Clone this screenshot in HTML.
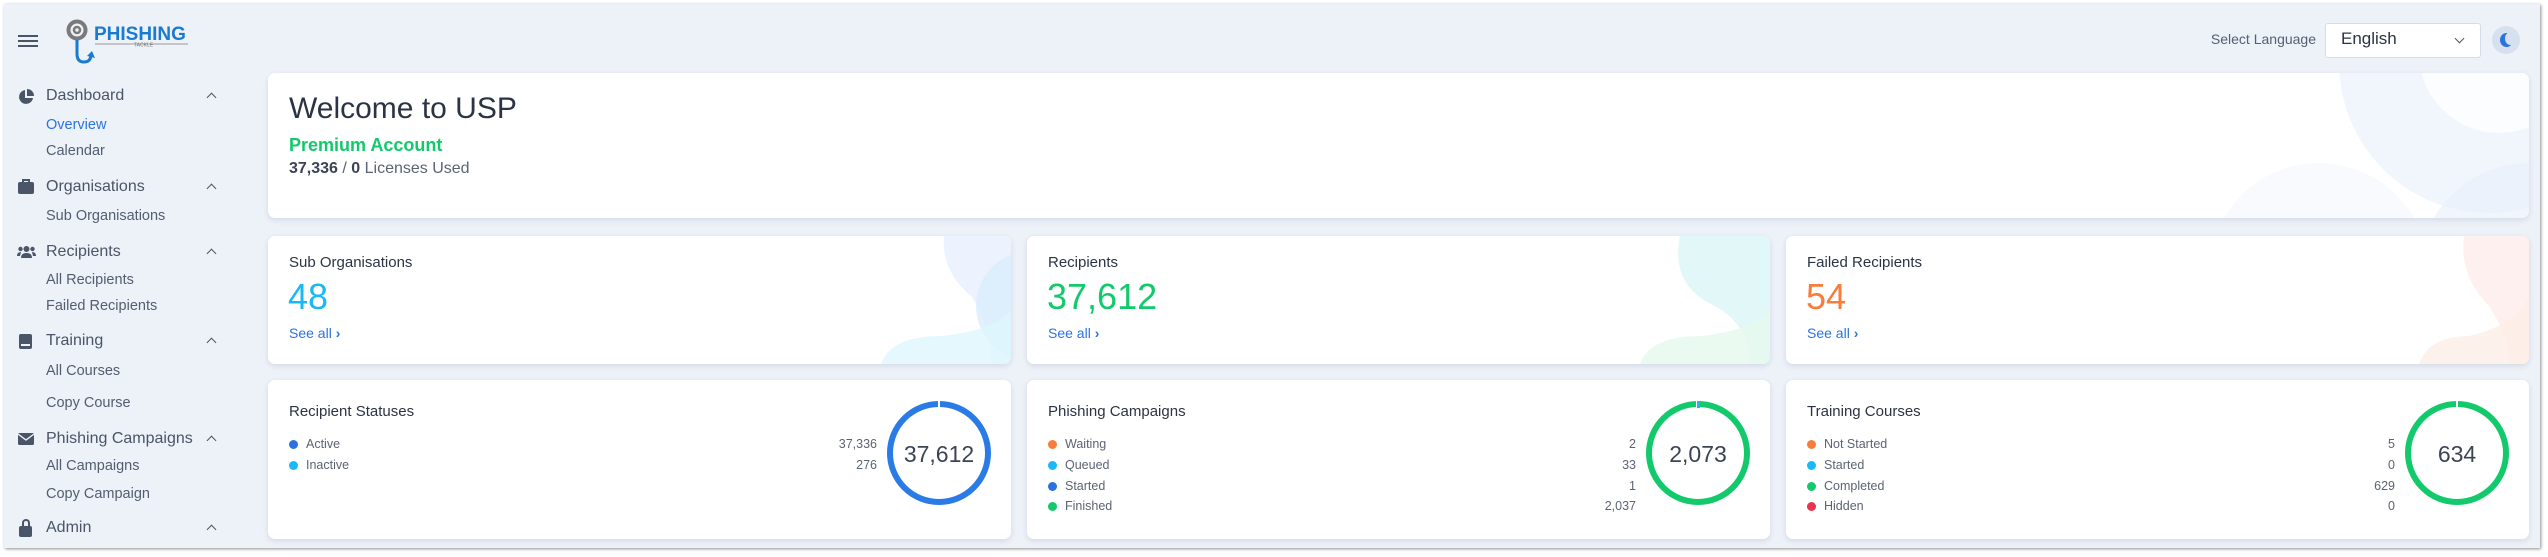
<!DOCTYPE html>
<html><head><meta charset="utf-8"><style>
*{margin:0;padding:0;box-sizing:border-box}
body{width:2548px;height:557px;background:#fff;font-family:"Liberation Sans",sans-serif;position:relative;overflow:hidden;color:#2b3445}
.frame{position:absolute;left:4px;top:4px;width:2536px;height:544px;background:#edf1f8;box-shadow:1px 1px 3px rgba(0,0,0,.45);overflow:hidden}
.a{position:absolute;white-space:nowrap}
.card{position:absolute;background:#fff;border-radius:7px;box-shadow:0 2px 6px rgba(30,50,90,.12);overflow:hidden}
.nav{font-size:16px;color:#4a5568;line-height:20px}
.sub{font-size:14.5px;color:#525e70;line-height:20px}
.chev{position:absolute;left:208px;width:7px;height:7px;border-left:1.5px solid #555;border-top:1.5px solid #555;transform:rotate(45deg)}
.ttl{font-size:15px;color:#2b3445}
.leg{font-size:12.5px;color:#5a6474;line-height:16px}
.dot{position:absolute;width:9px;height:9px;border-radius:50%}
.val{font-size:12.5px;color:#5a6474;text-align:right;width:80px;line-height:16px}
.see{font-size:14px;color:#2a74e0}
.num{font-size:23px;color:#3a4455}
</style></head><body>
<div class="frame"></div>
<!-- header -->
<div class="a" style="left:18px;top:35px;width:20px;height:2px;background:#4a5568;box-shadow:0 5px 0 #4a5568,0 10px 0 #4a5568"></div>
<svg class="a" style="left:62px;top:18px" width="130" height="48" viewBox="0 0 130 48">
<circle cx="15" cy="12" r="8.5" fill="none" stroke="#7a7a7a" stroke-width="4"/><circle cx="15" cy="12" r="3" fill="none" stroke="#7a7a7a" stroke-width="2.5"/>
<path d="M15 22 V36 Q15 44 22 44 Q28 44 29 38" fill="none" stroke="#1a7ad0" stroke-width="3"/><path d="M25 38 L30 33 L33 40Z" fill="#1a7ad0"/>
<text x="32" y="22" font-family="Liberation Sans" font-weight="bold" font-size="19" fill="#1a7ad0">PHISHING</text>
<line x1="33" y1="26" x2="126" y2="26" stroke="#999" stroke-width="1"/>
<text x="72" y="28.5" font-family="Liberation Sans" font-size="5" fill="#777">TACKLE</text>
</svg>
<div class="a" style="right:232px;top:31px;font-size:14px;color:#556070">Select Language</div>
<div class="a" style="left:2325px;top:23px;width:156px;height:35px;background:#fff;border:1px solid #d7dde7;border-radius:3px"></div>
<div class="a" style="left:2341px;top:29px;font-size:17px;color:#2b3445">English</div>
<div class="a" style="left:2456px;top:35px;width:7px;height:7px;border-right:1.5px solid #555;border-bottom:1.5px solid #555;transform:rotate(45deg)"></div>
<div class="a" style="left:2492px;top:26px;width:28px;height:28px;border-radius:50%;background:#d6e0ee"></div>
<div class="a" style="left:2500px;top:33px;width:13px;height:14px;border-radius:50%;background:#2a74e0"></div>
<div class="a" style="left:2505px;top:32px;width:11px;height:13px;border-radius:50%;background:#d6e0ee"></div>
<!-- sidebar -->
<svg class="a" style="left:18px;top:89px" width="16" height="16" viewBox="0 0 16 16"><path d="M7 1 A7 7 0 1 0 15 9 H7Z" fill="#4a5568"/><path d="M9 0 A7 7 0 0 1 16 7 H9Z" fill="#4a5568"/></svg>
<div class="a nav" style="left:46px;top:86px">Dashboard</div><div class="chev" style="top:94px"></div>
<div class="a sub" style="left:46px;top:115px;color:#2a74e0">Overview</div>
<div class="a sub" style="left:46px;top:141px">Calendar</div>
<div class="a" style="left:18px;top:182px;width:16px;height:12px;background:#4a5568;border-radius:2px"></div><div class="a" style="left:22px;top:179px;width:8px;height:4px;border:2px solid #4a5568;border-bottom:none"></div>
<div class="a nav" style="left:46px;top:177px">Organisations</div><div class="chev" style="top:185px"></div>
<div class="a sub" style="left:46px;top:206px">Sub Organisations</div>
<svg class="a" style="left:17px;top:245px" width="19" height="14" viewBox="0 0 19 14"><circle cx="9.5" cy="4" r="3" fill="#4a5568"/><circle cx="3.5" cy="4" r="2.2" fill="#4a5568"/><circle cx="15.5" cy="4" r="2.2" fill="#4a5568"/><path d="M4 13 Q4 8 9.5 8 Q15 8 15 13Z M0 11 Q0 7 4 7 L3 11Z M19 11 Q19 7 15 7 L16 11Z" fill="#4a5568"/></svg>
<div class="a nav" style="left:46px;top:242px">Recipients</div><div class="chev" style="top:250px"></div>
<div class="a sub" style="left:46px;top:270px">All Recipients</div>
<div class="a sub" style="left:46px;top:296px">Failed Recipients</div>
<div class="a" style="left:19px;top:334px;width:13px;height:15px;background:#4a5568;border-radius:2px"></div><div class="a" style="left:21px;top:344px;width:9px;height:2px;background:#edf1f8"></div>
<div class="a nav" style="left:46px;top:331px">Training</div><div class="chev" style="top:339px"></div>
<div class="a sub" style="left:46px;top:361px">All Courses</div>
<div class="a sub" style="left:46px;top:393px">Copy Course</div>
<svg class="a" style="left:18px;top:433px" width="16" height="12" viewBox="0 0 16 12"><rect width="16" height="12" rx="1.5" fill="#4a5568"/><path d="M0 1 L8 7 L16 1" fill="none" stroke="#edf1f8" stroke-width="1.4"/></svg>
<div class="a nav" style="left:46px;top:429px">Phishing Campaigns</div><div class="chev" style="top:437px"></div>
<div class="a sub" style="left:46px;top:456px">All Campaigns</div>
<div class="a sub" style="left:46px;top:484px">Copy Campaign</div>
<div class="a" style="left:19px;top:526px;width:13px;height:11px;background:#4a5568;border-radius:2px"></div><div class="a" style="left:21.5px;top:519px;width:8px;height:10px;border:2px solid #4a5568;border-radius:4px 4px 0 0;border-bottom:none"></div>
<div class="a nav" style="left:46px;top:518px">Admin</div><div class="chev" style="top:526px"></div>
<!-- welcome -->
<div class="card" style="left:268px;top:73px;width:2261px;height:145px">
<svg class="a" style="right:0;top:0" width="340" height="145"><circle cx="300" cy="-10" r="150" fill="#f1f6fd"/><circle cx="310" cy="-20" r="80" fill="#fff" opacity=".8"/><circle cx="340" cy="200" r="110" fill="#e8f0fb" opacity=".6"/><circle cx="130" cy="200" r="110" fill="#f8fafe"/></svg>
<div class="a" style="left:21px;top:19px;font-size:30px;color:#2b3445">Welcome to USP</div>
<div class="a" style="left:21px;top:62px;font-size:18px;font-weight:bold;color:#12c96b">Premium Account</div>
<div class="a" style="left:21px;top:87px;font-size:16px;color:#5a6474"><b style="color:#3a4455">37,336</b> / <b style="color:#3a4455">0</b> Licenses Used</div>
</div>
<!-- stat cards -->
<div class="card" style="left:268px;top:236px;width:743px;height:128px">
<svg class="a" style="right:0;top:0" width="130" height="128"><path d="M63 0 Q60 35 90 60 Q110 90 110 128 H130 V0Z" fill="#ecf2fe"/><circle cx="150" cy="70" r="55" fill="#d9ecfd" opacity=".8"/><path d="M0 128 Q10 100 60 100 Q110 95 130 75 V128Z" fill="#def6fd" opacity=".8"/></svg>
<div class="a ttl" style="left:21px;top:18px">Sub Organisations</div>
<div class="a" style="left:20px;top:40px;font-size:36px;color:#1ab8f5">48</div>
<div class="a see" style="left:21px;top:89px">See all <b>›</b></div></div>
<div class="card" style="left:1027px;top:236px;width:743px;height:128px">
<svg class="a" style="right:0;top:0" width="130" height="128"><path d="M40 0 Q30 50 75 70 Q110 90 110 128 H130 V0Z" fill="#e1f7f8"/><path d="M0 128 Q10 100 60 100 Q110 95 130 75 V128Z" fill="#e6f9ee" opacity=".8"/></svg>
<div class="a ttl" style="left:21px;top:18px">Recipients</div>
<div class="a" style="left:20px;top:40px;font-size:36px;color:#12c96b">37,612</div>
<div class="a see" style="left:21px;top:89px">See all <b>›</b></div></div>
<div class="card" style="left:1786px;top:236px;width:743px;height:128px">
<svg class="a" style="right:0;top:0" width="110" height="128"><path d="M45 0 Q40 40 70 70 Q90 100 90 128 H110 V0Z" fill="#fdf0ee"/><path d="M0 128 Q10 100 50 100 Q95 90 110 60 V128Z" fill="#fdeee6" opacity=".8"/></svg>
<div class="a ttl" style="left:21px;top:18px">Failed Recipients</div>
<div class="a" style="left:20px;top:40px;font-size:36px;color:#f87c3a">54</div>
<div class="a see" style="left:21px;top:89px">See all <b>›</b></div></div>
<!-- chart cards -->
<div class="card" style="left:268px;top:380px;width:743px;height:159px">
<div class="a ttl" style="left:21px;top:23px">Recipient Statuses</div>
<div class="dot" style="left:21px;top:60px;background:#2a74e0"></div><div class="a leg" style="left:38px;top:56px">Active</div><div class="a val" style="left:529px;top:56px">37,336</div>
<div class="dot" style="left:21px;top:81px;background:#1ab8f5"></div><div class="a leg" style="left:38px;top:77px">Inactive</div><div class="a val" style="left:529px;top:77px">276</div>
<svg class="a" style="left:618px;top:20px" width="106" height="106"><circle cx="53" cy="53" r="49" fill="none" stroke="#2a7be5" stroke-width="6"/><rect x="52" y="1" width="2" height="7" fill="#fff"/></svg>
<div class="a num" style="left:618px;top:61px;width:106px;text-align:center">37,612</div></div>
<div class="card" style="left:1027px;top:380px;width:743px;height:159px">
<div class="a ttl" style="left:21px;top:23px">Phishing Campaigns</div>
<div class="dot" style="left:21px;top:60px;background:#f87c3a"></div><div class="a leg" style="left:38px;top:56px">Waiting</div><div class="a val" style="left:529px;top:56px">2</div>
<div class="dot" style="left:21px;top:81px;background:#1ab8f5"></div><div class="a leg" style="left:38px;top:77px">Queued</div><div class="a val" style="left:529px;top:77px">33</div>
<div class="dot" style="left:21px;top:102px;background:#2a74e0"></div><div class="a leg" style="left:38px;top:98px">Started</div><div class="a val" style="left:529px;top:98px">1</div>
<div class="dot" style="left:21px;top:122px;background:#12c96b"></div><div class="a leg" style="left:38px;top:118px">Finished</div><div class="a val" style="left:529px;top:118px">2,037</div>
<svg class="a" style="left:618px;top:20px" width="106" height="106"><circle cx="53" cy="53" r="49" fill="none" stroke="#12c96b" stroke-width="6"/><rect x="52" y="1" width="3" height="7" fill="#1ab8f5"/><rect x="51" y="1" width="1" height="7" fill="#fff"/></svg>
<div class="a num" style="left:618px;top:61px;width:106px;text-align:center">2,073</div></div>
<div class="card" style="left:1786px;top:380px;width:743px;height:159px">
<div class="a ttl" style="left:21px;top:23px">Training Courses</div>
<div class="dot" style="left:21px;top:60px;background:#f87c3a"></div><div class="a leg" style="left:38px;top:56px">Not Started</div><div class="a val" style="left:529px;top:56px">5</div>
<div class="dot" style="left:21px;top:81px;background:#1ab8f5"></div><div class="a leg" style="left:38px;top:77px">Started</div><div class="a val" style="left:529px;top:77px">0</div>
<div class="dot" style="left:21px;top:102px;background:#12c96b"></div><div class="a leg" style="left:38px;top:98px">Completed</div><div class="a val" style="left:529px;top:98px">629</div>
<div class="dot" style="left:21px;top:122px;background:#e8344e"></div><div class="a leg" style="left:38px;top:118px">Hidden</div><div class="a val" style="left:529px;top:118px">0</div>
<svg class="a" style="left:618px;top:20px" width="106" height="106"><circle cx="53" cy="53" r="49" fill="none" stroke="#12c96b" stroke-width="6"/><rect x="52" y="1" width="2" height="7" fill="#fff"/></svg>
<div class="a num" style="left:618px;top:61px;width:106px;text-align:center">634</div></div>
</body></html>
